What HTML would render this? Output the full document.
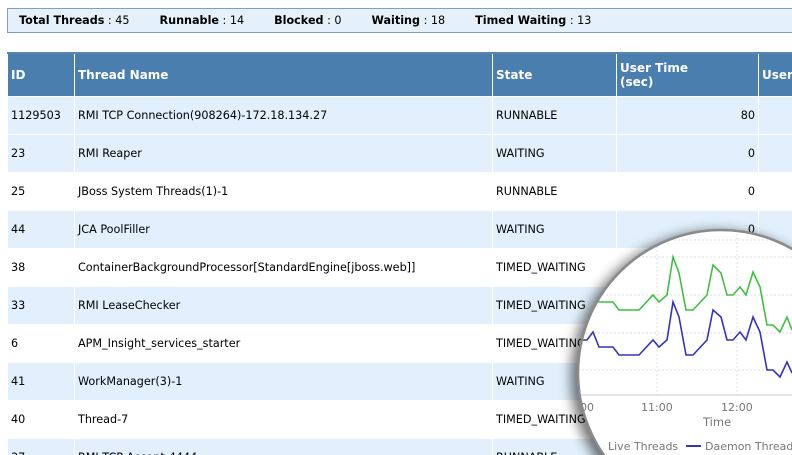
<!DOCTYPE html>
<html style="width:792px;height:455px;overflow:hidden"><head><meta charset="utf-8"><style>
*{margin:0;padding:0;box-sizing:border-box}
body{width:792px;height:455px;overflow:hidden;background:#fff;font-family:"DejaVu Sans",Verdana,"Liberation Sans",sans-serif;font-size:11.2px;color:#000;position:relative}
.bar{position:absolute;left:7px;top:8px;width:785px;height:25px;border:1px solid #7d9fc0;border-right:none;background:#e4f1fb;font-size:11.2px;line-height:23px;padding-left:11px;white-space:nowrap;overflow:hidden}
.bar b{font-weight:bold}
.bar span{margin-right:30px}
.wrap{position:absolute;left:7px;top:52px;width:785px;height:403px;overflow:hidden}
table{border-collapse:collapse;width:830px;table-layout:fixed;border-top:2px solid #5a85b0}
th{background:#4a7eae;color:#fff;font-weight:bold;font-size:12px;text-align:left;height:43px;border:1px solid #fff;padding:0 3px;vertical-align:middle;line-height:14px}
td{height:38px;border:1px solid #fff;padding:0 3px;white-space:nowrap;overflow:hidden}
tr.b td{background:#e1f0fc}
td.r{text-align:right}
</style></head><body>
<div class="bar"><span><b>Total Threads</b> : 45</span><span><b>Runnable</b> : 14</span><span><b>Blocked</b> : 0</span><span><b>Waiting</b> : 18</span><span><b>Timed Waiting</b> : 13</span></div>
<div class="wrap"><table>
<colgroup><col style="width:67px"><col style="width:418px"><col style="width:124px"><col style="width:142px"><col style="width:79px"></colgroup>
<tr><th>ID</th><th>Thread Name</th><th>State</th><th>User Time<br>(sec)</th><th>User</th></tr>
<tr class="b"><td>1129503</td><td>RMI TCP Connection(908264)-172.18.134.27</td><td>RUNNABLE</td><td class="r">80</td><td></td></tr>
<tr class="b"><td>23</td><td>RMI Reaper</td><td>WAITING</td><td class="r">0</td><td></td></tr>
<tr><td>25</td><td>JBoss System Threads(1)-1</td><td>RUNNABLE</td><td class="r">0</td><td></td></tr>
<tr class="b"><td>44</td><td>JCA PoolFiller</td><td>WAITING</td><td class="r">0</td><td></td></tr>
<tr><td>38</td><td>ContainerBackgroundProcessor[StandardEngine[jboss.web]]</td><td>TIMED_WAITING</td><td class="r"></td><td></td></tr>
<tr class="b"><td>33</td><td>RMI LeaseChecker</td><td>TIMED_WAITING</td><td class="r"></td><td></td></tr>
<tr><td>6</td><td>APM_Insight_services_starter</td><td>TIMED_WAITING</td><td class="r"></td><td></td></tr>
<tr class="b"><td>41</td><td>WorkManager(3)-1</td><td>WAITING</td><td class="r"></td><td></td></tr>
<tr><td>40</td><td>Thread-7</td><td>TIMED_WAITING</td><td class="r"></td><td></td></tr>
<tr class="b"><td>37</td><td>RMI TCP Accept-4444</td><td>RUNNABLE</td><td class="r"></td><td></td></tr>
</table></div>
<svg style="position:absolute;left:0;top:0" width="792" height="455">
<defs><clipPath id="c"><circle cx="721" cy="373" r="142"/></clipPath>
<filter id="s" x="-30%" y="-30%" width="160%" height="160%"><feGaussianBlur stdDeviation="6"/></filter></defs>
<circle cx="717" cy="377" r="146" fill="rgba(0,0,0,0.55)" filter="url(#s)"/>
<g clip-path="url(#c)">
<rect x="570" y="220" width="300" height="300" fill="#fff"/>
<g stroke="#ddd" stroke-dasharray="2,2" stroke-width="1">
<line x1="570" y1="240" x2="800" y2="240"/><line x1="570" y1="257" x2="800" y2="257"/><line x1="570" y1="295" x2="800" y2="295"/><line x1="570" y1="333" x2="800" y2="333"/><line x1="570" y1="370" x2="800" y2="370"/>
<line x1="657" y1="230" x2="657" y2="395"/><line x1="737" y1="230" x2="737" y2="395"/>
</g>
<line x1="570" y1="395" x2="800" y2="395" stroke="#ccc"/>
<polyline fill="none" stroke="#3ec13e" stroke-width="1.6" points="587,290 593,295 599,302 613,302 619,310 639,310 653,295 659,302 667,295 673,257 679,273 686,310 693,310 707,295 713,265 721,273 727,295 733,295 740,287 746,295 753,272 760,287 767,325 773,325 780,332 787,317 792,330"/>
<polyline fill="none" stroke="#3434b8" stroke-width="1.6" points="580,340 587,340 593,332 599,347 613,347 619,355 639,355 653,340 659,347 667,340 673,302 679,317 686,355 693,355 707,340 713,310 721,317 727,340 733,340 740,332 746,340 753,317 760,332 767,370 773,370 780,377 787,362 792,373"/>
<g font-family="DejaVu Sans,sans-serif" font-size="11" fill="#777">
<text x="580" y="411">00</text><text x="641" y="411">11:00</text><text x="721" y="411">12:00</text>
<text x="703" y="426" font-size="11.5">Time</text>
<text x="608" y="450">Live Threads</text>
<line x1="686" y1="446" x2="701" y2="446" stroke="#3434b8" stroke-width="2"/>
<text x="705" y="450">Daemon Threads</text>
</g>
</g>
<circle cx="721" cy="373" r="143" fill="none" stroke="#8a8a8a" stroke-width="2.5"/>
</svg>
</body></html>
